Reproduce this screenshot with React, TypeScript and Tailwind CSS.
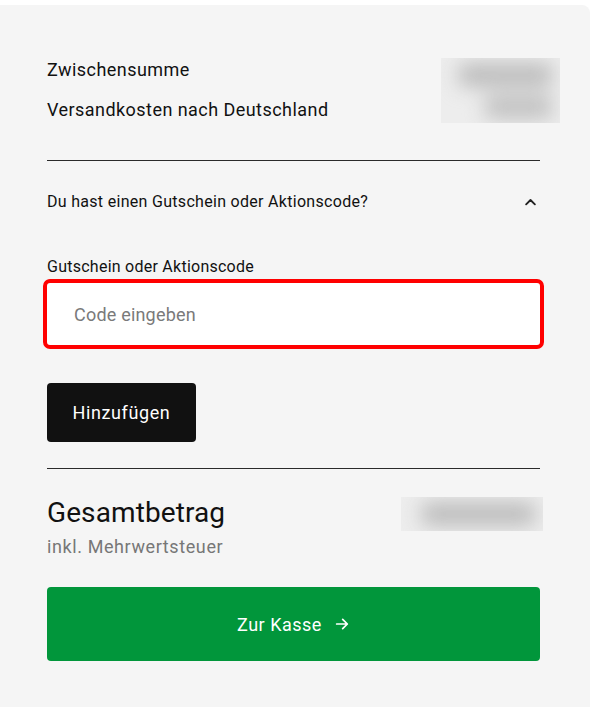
import { useState } from 'react';

const font = { fontFamily: 'Roboto, "Liberation Sans", sans-serif' };

// blurred price placeholder, like the screenshot
const BlurredValue = ({ className, rows = 2 }: { className: string; rows?: number }) => (
  <div className={`overflow-hidden bg-[#ededed] ${className}`}>
    <div className="flex h-full w-full flex-col justify-center gap-[10px] px-2 blur-[10px]">
      <div className="ml-auto h-[22px] w-[90%] rounded bg-[#b9b9b9]" />
      {rows > 1 && <div className="ml-auto h-[22px] w-[65%] rounded bg-[#bebebe]" />}
    </div>
  </div>
);

const App: React.FC = () => {
  const [open, setOpen] = useState(true);
  const [code, setCode] = useState('');

  return (
    <div className="min-h-[707px] bg-white pt-[5px] text-[#111111]" style={font}>
      <div className="w-[590px] rounded-tr-[8px] bg-[#f5f5f5] pb-[46px] pl-[47px] pr-[50px] pt-[53px]">
        {/* Subtotal rows */}
        <div className="relative">
          <div className="flex flex-col gap-[16px] text-[18px] leading-[24px] tracking-[0.45px]">
            <span>Zwischensumme</span>
            <span>Versandkosten nach Deutschland</span>
          </div>
          <BlurredValue className="absolute right-[-20px] top-[0px] h-[65px] w-[119px]" />
        </div>

        <div className="mt-[38px] h-px bg-[#2a2a2a]" />

        {/* Voucher toggle */}
        <button
          type="button"
          onClick={() => setOpen(!open)}
          className="mt-[30px] flex w-full items-center justify-between text-left text-[16px] leading-[22px] tracking-[0.3px]"
        >
          <span>Du hast einen Gutschein oder Aktionscode?</span>
          <svg width="15" height="15" viewBox="0 0 24 24" fill="none" stroke="#222" strokeWidth="3" strokeLinecap="round" strokeLinejoin="round" className={`mr-[2px] ${open ? '' : 'rotate-180'}`}>
            <path d="M5 15l7-7 7 7" />
          </svg>
        </button>

        {open && (
          <div>
            <label htmlFor="voucher" className="mt-[44px] block text-[16px] leading-[20px] tracking-[0.25px]">
              Gutschein oder Aktionscode
            </label>
            <div className="mt-[6px] rounded-[3px] outline-[4px] outline-solid outline-[#ff0000]">
              <input
                id="voucher"
                type="text"
                value={code}
                onChange={(e) => setCode(e.target.value)}
                placeholder="Code eingeben"
                className="block h-[62px] w-full bg-white px-[27px] text-[18px] tracking-[0.2px] text-[#111111] shadow-[0_2px_0_#cfcfcf] outline-none placeholder:text-[#7a7a7a]"
                style={font}
              />
            </div>
            <button
              type="button"
              className="mt-[38px] h-[59px] w-[149px] rounded-[4px] bg-[#111111] text-[18px] tracking-[0.6px] text-white"
            >
              Hinzufügen
            </button>
          </div>
        )}

        <div className="mt-[26px] h-px bg-[#2a2a2a]" />

        {/* Total */}
        <div className="relative mt-[27px]">
          <div className="text-[28px] leading-[34px] tracking-[0.1px]">Gesamtbetrag</div>
          <div className="mt-[6px] text-[18px] leading-[22px] tracking-[0.6px] text-[#777777]">inkl. Mehrwertsteuer</div>
          <BlurredValue rows={1} className="absolute right-[-3px] top-[1px] h-[34px] w-[142px]" />
        </div>

        <button
          type="button"
          className="mt-[29px] flex h-[74px] w-full items-center justify-center gap-[12px] rounded-[4px] bg-[#01963b] text-[18px] tracking-[0.5px] text-white"
        >
          <span>Zur Kasse</span>
          <svg width="16" height="16" viewBox="0 0 24 24" fill="none" stroke="white" strokeWidth="2.6" strokeLinecap="round" strokeLinejoin="round">
            <path d="M4 12h16M13 5l7 7-7 7" />
          </svg>
        </button>
      </div>
    </div>
  );
};

export default App;
